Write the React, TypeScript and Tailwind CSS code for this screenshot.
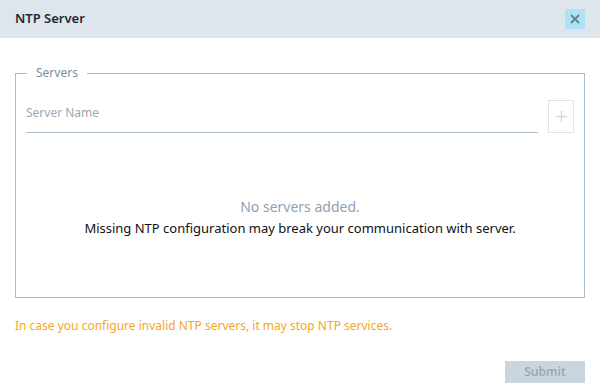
import * as React from 'react';

const font = { fontFamily: '"Noto Sans", "Open Sans", sans-serif' };

export default function App() {
    return (
        <div className="w-[600px] h-[391px] bg-white flex flex-col" style={font}>
            <div className="h-[38px] bg-[#dfe5ec] flex items-center justify-between pl-[15px] pr-[15px]">
                <span className="text-[13px] font-semibold text-[#1d2a36]">NTP Server</span>
                <button className="w-[20px] h-[20px] bg-[#aee3f5] flex items-center justify-center">
                    <svg width="10" height="10" viewBox="0 0 10 10">
                        <path d="M1 1 L9 9 M9 1 L1 9" stroke="#6b7f90" strokeWidth="2" />
                    </svg>
                </button>
            </div>
            <div className="flex flex-col px-[15px] pt-[26px]">
                <fieldset className="border border-[#a7bdcb] h-[234px] px-[10px] pb-0 m-0 min-w-0">
                    <legend className="ml-[1px] px-[9px] text-[12px] text-[#7a8e9e]">Servers</legend>
                    <div className="flex items-end gap-[10px] mt-[18px]">
                        <div className="flex-1 border-b border-[#a7bdcb] h-[33px] flex items-center pb-[6px]">
                            <span className="text-[12px] text-[#9aa8b4]">Server Name</span>
                        </div>
                        <div className="w-[26px] h-[33px] border border-[#dde3e8] flex items-center justify-center">
                            <svg width="11" height="11" viewBox="0 0 11 11">
                                <path d="M5.5 0 V11 M0 5.5 H11" stroke="#d3dbe2" strokeWidth="1.5" />
                            </svg>
                        </div>
                    </div>
                    <div className="flex flex-col items-center mt-[64px]">
                        <span className="text-[14px] text-[#8ea1b0] leading-[20px]">No servers added.</span>
                        <span className="text-[13px] text-[#111] leading-[20px] mt-[1px]">Missing NTP configuration may break your communication with server.</span>
                    </div>
                </fieldset>
                <div className="mt-[19px] text-[12px] text-[#f5a623]">In case you configure invalid NTP servers, it may stop NTP services.</div>
                <div className="flex justify-end mt-[26px]">
                    <button className="w-[80px] h-[22px] bg-[#c9d6df] text-[12px] text-[#98a9b6] font-semibold">Submit</button>
                </div>
            </div>
        </div>
    );
}
